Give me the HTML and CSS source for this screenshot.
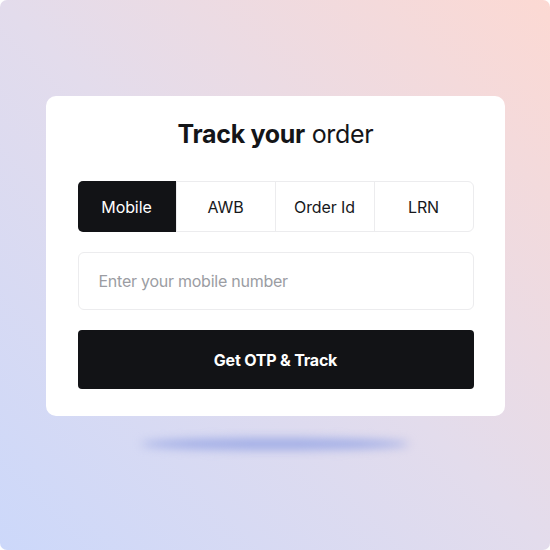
FILE: index.html
```html
<!DOCTYPE html>
<html>
<head>
<meta charset="utf-8">
<link rel="stylesheet" href="styles.css">
</head>
<body>
<div class="frame">
  <div class="card">
    <h1 class="title"><b>Track your</b> order</h1>
    <div class="tabs">
      <div class="tab active">Mobile</div>
      <div class="tab">AWB</div>
      <div class="tab">Order Id</div>
      <div class="tab">LRN</div>
    </div>
    <div class="input">Enter your mobile number</div>
    <div class="button">Get OTP &amp; Track</div>
  </div>
  <div class="shadow"></div>
</div>
</body>
</html>
```
FILE: styles.css
```css
html, body {
  margin: 0;
  padding: 0;
  background: #ffffff;
}
body {
  width: 550px;
  height: 550px;
  font-family: Inter, "Liberation Sans", sans-serif;
}
.frame {
  width: 550px;
  height: 550px;
  border-radius: 7px;
  background: linear-gradient(45deg, #ccd8fa 0%, #e3dcec 50%, #fcd9d3 100%);
  display: flex;
  flex-direction: column;
  align-items: center;
  padding-top: 96px;
  box-sizing: border-box;
}
.card {
  width: 459px;
  height: 320px;
  box-sizing: border-box;
  background: #ffffff;
  border-radius: 10px;
  padding: 22px 31px 0 32px;
  display: flex;
  flex-direction: column;
}
.title {
  margin: 0;
  text-align: center;
  font-size: 25px;
  font-weight: 400;
  letter-spacing: -0.3px;
  color: #141518;
  line-height: 32px;
}
.title b {
  font-weight: 700;
}
.tabs {
  margin-top: 31px;
  display: flex;
  height: 51px;
  border: 1px solid #ececee;
  border-radius: 6px;
  box-sizing: border-box;
}
.tab {
  flex: 1;
  display: flex;
  align-items: center;
  justify-content: center;
  font-size: 16px;
  color: #17181b;
  letter-spacing: -0.1px;
  border-left: 1px solid #ececee;
}
.tab:first-child {
  border-left: none;
}
.tab.active {
  background: #121316;
  color: #ffffff;
  border-radius: 5px 0 0 5px;
  margin: -1px 0 -1px -1px;
}
.input {
  margin-top: 20px;
  height: 58px;
  border: 1px solid #ececee;
  border-radius: 6px;
  box-sizing: border-box;
  padding-left: 20px;
  display: flex;
  align-items: center;
  font-size: 16px;
  color: #9b9da3;
  letter-spacing: -0.25px;
}
.button {
  margin-top: 20px;
  height: 59px;
  background: #121316;
  border-radius: 4px;
  display: flex;
  align-items: center;
  justify-content: center;
  font-size: 16px;
  font-weight: 700;
  color: #ffffff;
  letter-spacing: -0.2px;
}
.shadow {
  margin-top: 22px;
  width: 268px;
  height: 12px;
  border-radius: 50%;
  background: #a2aee6;
  filter: blur(5px);
}
```
